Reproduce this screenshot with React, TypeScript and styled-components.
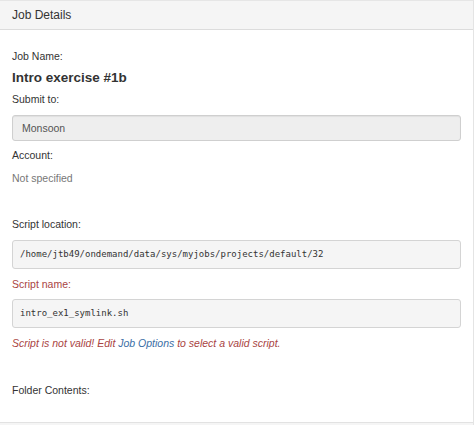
import React from 'react';
import styled, { createGlobalStyle } from 'styled-components';

const GlobalStyle = createGlobalStyle`
  html, body {
    margin: 0;
    padding: 0;
    background: #fff;
  }
  body {
    font-family: "Liberation Sans", Arial, Helvetica, sans-serif;
    color: #333;
  }
`;

const Panel = styled.div`
  width: 474px;
  height: 425px;
  box-sizing: border-box;
  border-right: 1px solid #e4e4e4;
  display: flex;
  flex-direction: column;
  overflow: hidden;
`;

const Heading = styled.div`
  height: 30px;
  box-sizing: border-box;
  border-top: 1px solid #e6e6e6;
  border-bottom: 1px solid #dcdcdc;
  background: #f5f5f5;
  padding: 0 12px;
  font-size: 12px;
  line-height: 28px;
  color: #333;
`;

const Body = styled.div`
  flex: 1;
  padding: 19px 12px 0;
  display: flex;
  flex-direction: column;
`;

const Label = styled.div<{ $error?: boolean; $gap?: number }>`
  font-size: 10.5px;
  line-height: 15px;
  color: ${(p) => (p.$error ? '#a94442' : '#333')};
  margin-bottom: ${(p) => p.$gap ?? 7.5}px;
`;

const JobTitle = styled.div`
  font-size: 13.5px;
  font-weight: bold;
  line-height: 19px;
  color: #333;
  margin: 4px 0 5px;
`;

const Muted = styled.div`
  font-size: 10.5px;
  line-height: 15px;
  color: #777;
`;

const ReadOnlyInput = styled.div`
  height: 26px;
  box-sizing: border-box;
  border: 1px solid #cfcfcf;
  border-radius: 3px;
  background: #eee;
  padding: 0 9px;
  font-size: 10.5px;
  line-height: 24px;
  color: #555;
  box-shadow: inset 0 1px 1px rgba(0, 0, 0, 0.06);
  margin-bottom: 7.5px;
`;

const Pre = styled.pre`
  margin: 0 0 8px;
  height: 29px;
  box-sizing: border-box;
  border: 1px solid #d4d4d4;
  border-radius: 3px;
  background: #f5f5f5;
  padding: 0 7px;
  font-family: "DejaVu Sans Mono", "Liberation Mono", monospace;
  font-size: 9px;
  line-height: 27px;
  color: #333;
  white-space: pre;
  overflow: hidden;
`;

const Spacer = styled.div<{ $h: number }>`
  height: ${(p) => p.$h}px;
  flex-shrink: 0;
`;

const ErrorText = styled.div`
  font-size: 10.5px;
  line-height: 15px;
  font-style: italic;
  color: #a94442;
`;

const Link = styled.a`
  color: #3a6ea5;
  text-decoration: none;
`;

const Footer = styled.div`
  height: 2px;
  border-top: 1px solid #e2e2e2;
  background: #f5f5f5;
`;

export default function App() {
  return (
    <>
      <GlobalStyle />
      <Panel>
        <Heading>Job Details</Heading>
        <Body>
          <Label $gap={0}>Job Name:</Label>
          <JobTitle>Intro exercise #1b</JobTitle>
          <Label>Submit to:</Label>
          <ReadOnlyInput>Monsoon</ReadOnlyInput>
          <Label $gap={8}>Account:</Label>
          <Muted>Not specified</Muted>
          <Spacer $h={31} />
          <Label>Script location:</Label>
          <Pre>/home/jtb49/ondemand/data/sys/myjobs/projects/default/32</Pre>
          <Label $error>Script name:</Label>
          <Pre>intro_ex1_symlink.sh</Pre>
          <ErrorText>
            Script is not valid! Edit <Link href="#">Job Options</Link> to
            select a valid script.
          </ErrorText>
          <Spacer $h={32} />
          <Label $gap={0}>Folder Contents:</Label>
        </Body>
        <Footer />
      </Panel>
    </>
  );
}
